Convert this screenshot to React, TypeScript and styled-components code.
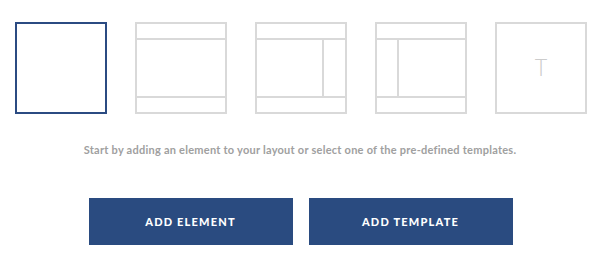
import React from "react";
import styled, { createGlobalStyle } from "styled-components";

const Global = createGlobalStyle`
  html, body { margin: 0; padding: 0; background: #ffffff; }
  body { font-family: "Lato", "Open Sans", sans-serif; }
`;

const Page = styled.div`
  width: 600px;
  height: 268px;
  display: flex;
  flex-direction: column;
  padding-top: 22px;
  box-sizing: border-box;
`;

const Templates = styled.div`
  display: flex;
  gap: 28px;
  padding-left: 15px;
`;

const Tile = styled.div<{ $active?: boolean; $cols: string; $rows: string }>`
  width: 92px;
  height: 92px;
  box-sizing: border-box;
  border: 2px solid ${(p) => (p.$active ? "#2b4b82" : "#d9d9d9")};
  background: #d9d9d9;
  display: grid;
  grid-template-columns: ${(p) => p.$cols};
  grid-template-rows: ${(p) => p.$rows};
  gap: 2px;
  cursor: pointer;
`;

const Cell = styled.div<{ $span?: number }>`
  background: #ffffff;
  grid-column: ${(p) => (p.$span ? `span ${p.$span}` : "auto")};
  display: flex;
  align-items: center;
  justify-content: center;
`;

const TextGlyph = styled.span`
  font-family: "Open Sans", "Liberation Sans", sans-serif;
  font-weight: 300;
  font-size: 23px;
  color: #cccccc;
  line-height: 1;
  margin-top: -2px;
`;

const Hint = styled.p`
  margin: 28px 0 0;
  text-align: center;
  font-family: "Lato", sans-serif;
  font-weight: 700;
  font-size: 11px;
  line-height: 15px;
  color: #a0a0a0;
  letter-spacing: 0.25px;
`;

const Actions = styled.div`
  display: flex;
  justify-content: center;
  gap: 16px;
  margin-top: 41px;
  padding-left: 1px;
`;

const Button = styled.button`
  width: 204px;
  height: 47px;
  border: none;
  background: #2a4b80;
  color: #ffffff;
  font-family: "Lato", sans-serif;
  font-weight: 900;
  font-size: 11px;
  letter-spacing: 1.2px;
  text-transform: uppercase;
  cursor: pointer;
`;

export default function App() {
  return (
    <>
      <Global />
      <Page>
        <Templates>
          <Tile $active $cols="1fr" $rows="1fr">
            <Cell />
          </Tile>
          <Tile $cols="1fr" $rows="14px 1fr 14px">
            <Cell />
            <Cell />
            <Cell />
          </Tile>
          <Tile $cols="65px 1fr" $rows="14px 1fr 14px">
            <Cell $span={2} />
            <Cell />
            <Cell />
            <Cell $span={2} />
          </Tile>
          <Tile $cols="20px 1fr" $rows="14px 1fr 14px">
            <Cell $span={2} />
            <Cell />
            <Cell />
            <Cell $span={2} />
          </Tile>
          <Tile $cols="1fr" $rows="1fr">
            <Cell>
              <TextGlyph>T</TextGlyph>
            </Cell>
          </Tile>
        </Templates>
        <Hint>
          Start by adding an element to your layout or select one of the pre-defined templates.
        </Hint>
        <Actions>
          <Button>Add Element</Button>
          <Button>Add Template</Button>
        </Actions>
      </Page>
    </>
  );
}
